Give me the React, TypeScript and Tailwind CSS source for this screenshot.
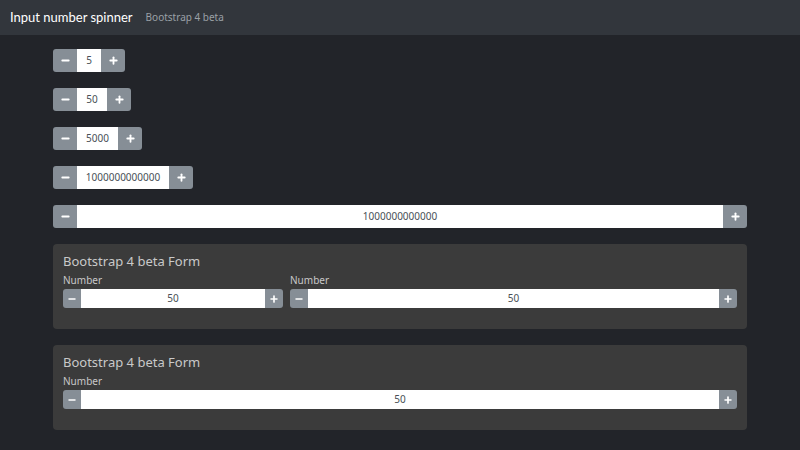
import { Minus, Plus } from "lucide-react";

type SpinnerProps = { value: string; inputW?: string; full?: boolean; small?: boolean };

function Spinner({ value, inputW, full, small }: SpinnerProps) {
  const btn = small
    ? "flex h-[19px] w-[18px] items-center justify-center bg-[#868e96] text-white"
    : "flex h-[23px] w-[24px] items-center justify-center bg-[#868e96] text-white";
  const icon = small ? "h-[10px] w-[10px]" : "h-[11px] w-[11px]";
  return (
    <div className={full ? "flex w-full" : "flex w-fit"}>
      <button className={`${btn} rounded-l-[3px]`}>
        <Minus className={icon} strokeWidth={4} />
      </button>
      <div
        className={`flex items-center justify-center bg-white text-[10px] text-[#495057] ${
          full ? "flex-1" : inputW ?? ""
        } ${small ? "h-[19px]" : "h-[23px]"}`}
      >
        {value}
      </div>
      <button className={`${btn} rounded-r-[3px]`}>
        <Plus className={icon} strokeWidth={4} />
      </button>
    </div>
  );
}

function Label() {
  return <label className="mb-[2px] text-[10px] leading-[14px] text-[#c8c8c8]">Number</label>;
}

function Field({ value }: { value: string }) {
  return (
    <div className="flex flex-1 flex-col">
      <Label />
      <Spinner value={value} full small />
    </div>
  );
}

function FormCard({ children }: { children: React.ReactNode }) {
  return (
    <div className="rounded-[4px] bg-[#3b3b3b] px-[10px] pt-[7px] pb-[21px]">
      <h3 className="mb-[2px] text-[13px] leading-[20px] text-[#c9c9c9]">Bootstrap 4 beta Form</h3>
      {children}
    </div>
  );
}

export default function App() {
  return (
    <div className="h-[450px] w-[800px] overflow-hidden bg-[#222429] font-['Noto_Sans',sans-serif]">
      <nav className="flex h-[35px] items-center bg-[#32363c] px-[10px]">
        <span className="font-['Lato',sans-serif] text-[13px] text-white">Input number spinner</span>
        <span className="ml-[13px] text-[10px] text-[#9aa0a6]">Bootstrap 4 beta</span>
      </nav>
      <main className="mx-[53px] flex flex-col gap-[16px] pt-[14px]">
        <Spinner value="5" inputW="w-[24px]" />
        <Spinner value="50" inputW="w-[30px]" />
        <Spinner value="5000" inputW="w-[41px]" />
        <Spinner value="1000000000000" inputW="w-[92px]" />
        <Spinner value="1000000000000" full />
        <FormCard>
          <div className="flex gap-[7px]">
            <div className="flex w-[220px] flex-col">
              <Label />
              <Spinner value="50" full small />
            </div>
            <Field value="50" />
          </div>
        </FormCard>
        <FormCard>
          <Field value="50" />
        </FormCard>
      </main>
    </div>
  );
}
